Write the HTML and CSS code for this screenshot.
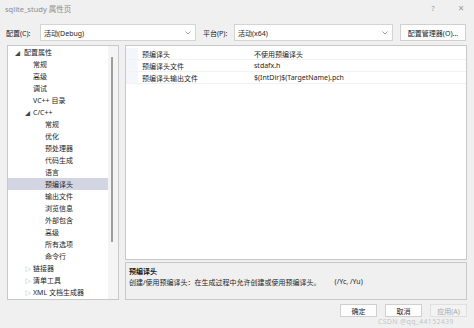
FILE: index.html
```html
<!DOCTYPE html>
<html lang="zh-CN">
<head>
    <meta charset="UTF-8">
    <title>sqlite_study 属性页</title>
    <link rel="stylesheet" href="styles.css">
</head>
<body>
    <div class="dialog">
        <div class="titlebar">
            <span class="title">sqlite_study 属性页</span>
            <span class="help">?</span>
            <span class="close">×</span>
        </div>

        <div class="toolbar">
            <span class="lbl lbl-conf">配置(C):</span>
            <div class="combo combo-conf">
                <span>活动(Debug)</span>
                <svg class="chev" width="6" height="4" viewBox="0 0 6 4"><path d="M0.5 0.5 L3 3 L5.5 0.5" fill="none" stroke="#888" stroke-width="0.8"/></svg>
            </div>
            <span class="lbl lbl-plat">平台(P):</span>
            <div class="combo combo-plat">
                <span>活动(x64)</span>
                <svg class="chev" width="6" height="4" viewBox="0 0 6 4"><path d="M0.5 0.5 L3 3 L5.5 0.5" fill="none" stroke="#888" stroke-width="0.8"/></svg>
            </div>
            <div class="btn btn-mgr">配置管理器(O)...</div>
        </div>

        <div class="main">
            <div class="tree">
                <ul class="items">
                    <li class="lv0"><span class="arr open">◢</span>配置属性</li>
                    <li class="lv1">常规</li>
                    <li class="lv1">高级</li>
                    <li class="lv1">调试</li>
                    <li class="lv1">VC++ 目录</li>
                    <li class="lv1 has"><span class="arr open">◢</span>C/C++</li>
                    <li class="lv2">常规</li>
                    <li class="lv2">优化</li>
                    <li class="lv2">预处理器</li>
                    <li class="lv2">代码生成</li>
                    <li class="lv2">语言</li>
                    <li class="lv2 sel">预编译头</li>
                    <li class="lv2">输出文件</li>
                    <li class="lv2">浏览信息</li>
                    <li class="lv2">外部包含</li>
                    <li class="lv2">高级</li>
                    <li class="lv2">所有选项</li>
                    <li class="lv2">命令行</li>
                    <li class="lv1 has"><span class="arr closed">▷</span>链接器</li>
                    <li class="lv1 has"><span class="arr closed">▷</span>清单工具</li>
                    <li class="lv1 has"><span class="arr closed">▷</span>XML 文档生成器</li>
                </ul>
                <div class="scroll"><div class="thumb"></div></div>
            </div>

            <div class="right">
                <div class="grid">
                    <div class="row"><span class="gut"></span><span class="name">预编译头</span><span class="val">不使用预编译头</span></div>
                    <div class="row"><span class="gut"></span><span class="name">预编译头文件</span><span class="val">stdafx.h</span></div>
                    <div class="row"><span class="gut"></span><span class="name">预编译头输出文件</span><span class="val">$(IntDir)$(TargetName).pch</span></div>
                </div>
                <div class="desc">
                    <div class="desc-title">预编译头</div>
                    <div class="desc-text"><span>创建/使用预编译头：在生成过程中允许创建或使用预编译头。</span><span class="opt">(/Yc, /Yu)</span></div>
                </div>
            </div>
        </div>

        <div class="footer">
            <div class="btn btn-ok">确定</div>
            <div class="btn btn-cancel">取消</div>
            <div class="btn btn-apply">应用(A)</div>
        </div>
        <div class="mark">CSDN @qq_44152439</div>
    </div>
</body>
</html>
```

FILE: styles.css
```css
* {
    box-sizing: border-box;
}

body {
    margin: 0;
    background-color: #f0f0f0;
    font-family: "Noto Sans", "Noto Sans CJK SC", sans-serif;
    font-size: 7px;
    color: #1e1e1e;
}

.dialog {
    position: relative;
    width: 474px;
    height: 328px;
    overflow: hidden;
}

.titlebar {
    display: flex;
    align-items: center;
    height: 16px;
    padding-left: 5px;
    color: #8c8c8c;
}
.title {
    flex: 1;
    font-size: 7.5px;
}
.help {
    width: 10px;
    margin-right: 18px;
    text-align: center;
    color: #999;
}
.close {
    width: 10px;
    margin-right: 8px;
    text-align: center;
    font-size: 10px;
    color: #999;
}

.toolbar {
    display: flex;
    align-items: center;
    height: 17px;
    margin-top: 8px;
    padding-left: 6px;
}
.lbl-conf {
    width: 34px;
}
.lbl-plat {
    width: 31px;
    margin-left: 7px;
}
.combo {
    display: flex;
    align-items: center;
    justify-content: space-between;
    height: 17px;
    padding: 0 4px 0 3px;
    background-color: #fff;
    border: 1px solid #d4d4d4;
}
.combo-conf {
    width: 156px;
}
.combo-plat {
    width: 159px;
}
.btn {
    display: flex;
    align-items: center;
    justify-content: center;
    height: 17px;
    background-color: #fdfdfd;
    border: 1px solid #d0d0d0;
}
.btn-mgr {
    width: 66px;
    margin-left: 7px;
}

.main {
    display: flex;
    gap: 6px;
    height: 255px;
    margin-top: 4px;
    padding-left: 7px;
}

.tree {
    display: flex;
    width: 112px;
    background-color: #fff;
    border: 1px solid #c8c8c8;
    overflow: hidden;
}
.items {
    flex: 1;
    list-style: none;
    margin: 0;
    padding: 0;
}
.items li {
    display: flex;
    align-items: center;
    height: 12px;
    white-space: nowrap;
}
.lv0 {
    padding-left: 5px;
}
.lv1 {
    padding-left: 25px;
}
.lv1.has {
    padding-left: 15px;
}
.lv2 {
    padding-left: 37px;
}
.sel {
    background-color: #d3d5e2;
}
.arr {
    width: 10px;
    color: #444;
}
.arr.open {
    font-size: 5px;
    padding-left: 2px;
}
.arr.closed {
    font-size: 6px;
    color: #777;
    padding-left: 2px;
}
.lv0 .arr {
    width: 11px;
}

.scroll {
    width: 10px;
    padding: 11px 0 0 3px;
    background-color: #f4f4f4;
}
.thumb {
    width: 2px;
    height: 185px;
    background-color: #9e9e9e;
}

.right {
    display: flex;
    flex-direction: column;
    gap: 2px;
    width: 342px;
}
.grid {
    flex: 1;
    padding-top: 2px;
    background-color: #fff;
    border: 1px solid #c8c8c8;
}
.row {
    display: flex;
    align-items: center;
    height: 12px;
    border-bottom: 1px solid #f2f2f2;
}
.gut {
    width: 12px;
    height: 100%;
    background-color: #f3f6fb;
}
.name {
    width: 115px;
    padding-left: 4px;
}
.val {
    flex: 1;
    padding-left: 1px;
}

.desc {
    height: 38px;
    padding: 3px 3px 0 3px;
    background-color: #f0f0f0;
    border: 1px solid #c8c8c8;
}
.desc-title {
    height: 11px;
    font-weight: bold;
}
.desc-text {
    display: flex;
    height: 11px;
}
.opt {
    margin-left: 14px;
}

.footer {
    display: flex;
    justify-content: flex-end;
    gap: 8px;
    margin-top: 4px;
    padding-right: 7px;
}
.footer .btn {
    width: 37px;
    height: 13px;
}
.btn-apply {
    color: #a8a8a8;
    background-color: #f3f3f3;
    border-color: #e0e0e0;
}

.mark {
    position: absolute;
    left: 378px;
    top: 317px;
    color: rgba(150, 150, 150, 0.5);
    font-size: 7px;
    letter-spacing: 0.3px;
}
```
